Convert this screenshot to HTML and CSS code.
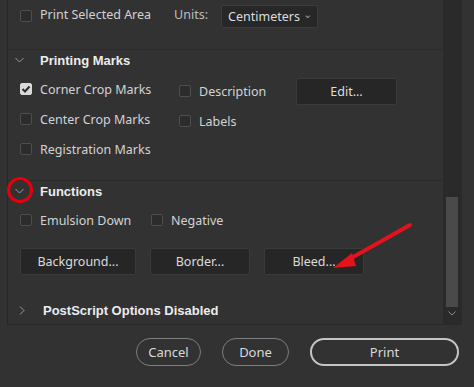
FILE: index.html
```html
<!DOCTYPE html>
<html lang="en">
<head>
    <meta charset="UTF-8">
    <title>Print Settings</title>
    <link rel="stylesheet" href="styles.css">
</head>
<body>

<div class="dialog">
    <div class="main">
        <div class="panel">
            <div class="top-row">
                <span class="check"></span>
                <span class="label">Print Selected Area</span>
                <span class="units">Units:</span>
                <div class="select">Centimeters <span class="caret">&#8964;</span></div>
            </div>

            <div class="section marks">
                <div class="head">
                    <svg class="chev" width="9" height="6" viewBox="0 0 9 6"><path d="M0.5 1 L4.5 5 L8.5 1" fill="none" stroke="#9a9a9a" stroke-width="1"/></svg>
                    <span>Printing Marks</span>
                </div>
                <div class="marks-grid">
                    <div class="opt"><span class="check on"><svg width="10" height="8" viewBox="0 0 10 8"><path d="M1.5 4 L4 6.5 L8.5 1.5" fill="none" stroke="#2b2b2b" stroke-width="2"/></svg></span>Corner Crop Marks</div>
                    <div class="opt low"><span class="check"></span>Description</div>
                    <div class="opt low"><button class="btn edit">Edit...</button></div>
                    <div class="opt"><span class="check"></span>Center Crop Marks</div>
                    <div class="opt low"><span class="check"></span>Labels</div>
                    <div></div>
                    <div class="opt"><span class="check"></span>Registration Marks</div>
                </div>
            </div>

            <div class="section functions">
                <div class="head">
                    <svg class="chev" width="9" height="6" viewBox="0 0 9 6"><path d="M0.5 1 L4.5 5 L8.5 1" fill="none" stroke="#9a9a9a" stroke-width="1"/></svg>
                    <span>Functions</span>
                    <span class="ring"></span>
                </div>
                <div class="func-row">
                    <div class="opt emul"><span class="check"></span>Emulsion Down</div>
                    <div class="opt"><span class="check"></span>Negative</div>
                </div>
                <div class="btn-row">
                    <button class="btn wide">Background...</button>
                    <button class="btn">Border...</button>
                    <button class="btn">Bleed...</button>
                </div>
                <div class="head post">
                    <svg class="chev right" width="6" height="9" viewBox="0 0 6 9"><path d="M1 0.5 L5 4.5 L1 8.5" fill="none" stroke="#9a9a9a" stroke-width="1"/></svg>
                    <span>PostScript Options Disabled</span>
                </div>
            </div>
        </div>

        <div class="scrollbar">
            <div class="thumb"></div>
            <svg class="down" width="8" height="5" viewBox="0 0 8 5"><path d="M0.5 0.5 L4 4 L7.5 0.5" fill="none" stroke="#8a8a8a" stroke-width="1"/></svg>
        </div>
    </div>

    <div class="actions">
        <button class="pill">Cancel</button>
        <button class="pill done">Done</button>
        <button class="pill print">Print</button>
    </div>

    <svg class="arrow" width="90" height="60" viewBox="0 0 90 60">
        <path d="M82 8 L18 44" stroke="#e4121a" stroke-width="4" stroke-linecap="round"/>
        <path d="M5 51 L24 36 L28 49 Z" fill="#e4121a"/>
    </svg>
</div>

</body>
</html>
```

FILE: styles.css
```css
body {
    margin: 0;
    background: #323232;
    font-family: "Noto Sans", sans-serif;
    font-size: 12.5px;
    color: #d2d2d2;
    overflow: hidden;
}
.dialog {
    position: relative;
    width: 474px;
    height: 387px;
}
.main {
    display: flex;
    height: 325px;
}
.panel {
    width: 436px;
    box-sizing: border-box;
    border-left: 1px solid #282828;
    border-bottom: 1px solid #282828;
    margin-left: 7px;
}
.top-row {
    height: 49px;
    display: flex;
    align-items: flex-start;
    padding-left: 12px;
}
.top-row .check {
    margin-top: 10px;
}
.top-row .label {
    margin-left: 8px;
    margin-top: 6px;
}
.units {
    margin-left: 23px;
    margin-top: 6px;
    color: #bdbdbd;
}
.select {
    margin-left: 13px;
    margin-top: 5px;
    height: 23px;
    box-sizing: border-box;
    padding: 2px 5px 0 6px;
    background: #272727;
    border: 1px solid #3c3c3c;
    border-radius: 2px;
    color: #dcdcdc;
}
.caret {
    color: #9a9a9a;
    font-size: 11px;
    position: relative;
    top: -3px;
}
.section {
    border-top: 1px solid #2a2a2a;
}
.head {
    position: relative;
    height: 20px;
    display: flex;
    align-items: center;
    padding-left: 7px;
    font-family: "Liberation Sans", sans-serif;
    font-weight: bold;
    font-size: 13px;
    color: #ececec;
}
.chev {
    margin-right: 16px;
}
.chev.right {
    margin-left: 2px;
    margin-right: 18px;
}
.marks {
    height: 130px;
}
.marks-grid {
    display: grid;
    grid-template-columns: 159px 117px auto;
    grid-auto-rows: 30px;
    padding-top: 4px;
    padding-left: 12px;
}
.opt {
    display: flex;
    align-items: center;
    gap: 8px;
}
.opt.low {
    padding-top: 4px;
}
.check {
    display: inline-flex;
    align-items: center;
    justify-content: center;
    width: 12px;
    height: 12px;
    box-sizing: border-box;
    border: 1px solid #4e4e4e;
    border-radius: 2px;
    background: #2c2c2c;
    flex: none;
}
.check.on {
    background: #d9d9d9;
    border-color: #d9d9d9;
}
.btn {
    height: 27px;
    width: 100px;
    background: #262626;
    border: 1px solid #3a3a3a;
    border-radius: 2px;
    color: #dcdcdc;
    font-family: "Noto Sans", sans-serif;
    font-size: 12.5px;
    padding: 0;
}
.btn.edit {
    width: 101px;
}
.btn.wide {
    width: 116px;
}
.functions {
    height: 143px;
    box-sizing: border-box;
}
.ring {
    position: absolute;
    left: -1px;
    top: -4px;
    width: 20px;
    height: 20px;
    border: 3px solid #e6000c;
    border-radius: 50%;
}
.func-row {
    display: flex;
    height: 30px;
    padding-top: 4px;
    padding-left: 12px;
}
.emul {
    width: 131px;
}
.btn-row {
    display: flex;
    gap: 14px;
    padding-left: 12px;
    margin-top: 13px;
}
.head.post {
    margin-top: 25px;
    padding-left: 9px;
}
.scrollbar {
    position: relative;
    width: 19px;
    background: #2a2a2a;
}
.thumb {
    position: absolute;
    left: 3px;
    top: 197px;
    width: 12px;
    height: 110px;
    background: #4a4a4a;
}
.down {
    position: absolute;
    left: 5px;
    top: 311px;
}
.actions {
    display: flex;
    justify-content: flex-end;
    gap: 21px;
    padding-right: 15px;
    margin-top: 13px;
}
.pill {
    height: 28px;
    width: 65px;
    background: transparent;
    border: 1.5px solid #7e7e7e;
    border-radius: 14px;
    color: #dadada;
    font-family: "Noto Sans", sans-serif;
    font-size: 13px;
    padding: 0;
}
.pill.done {
    width: 67px;
}
.pill.print {
    width: 149px;
    border: 2px solid #c4c4c4;
}
.arrow {
    position: absolute;
    left: 328px;
    top: 217px;
}
```
